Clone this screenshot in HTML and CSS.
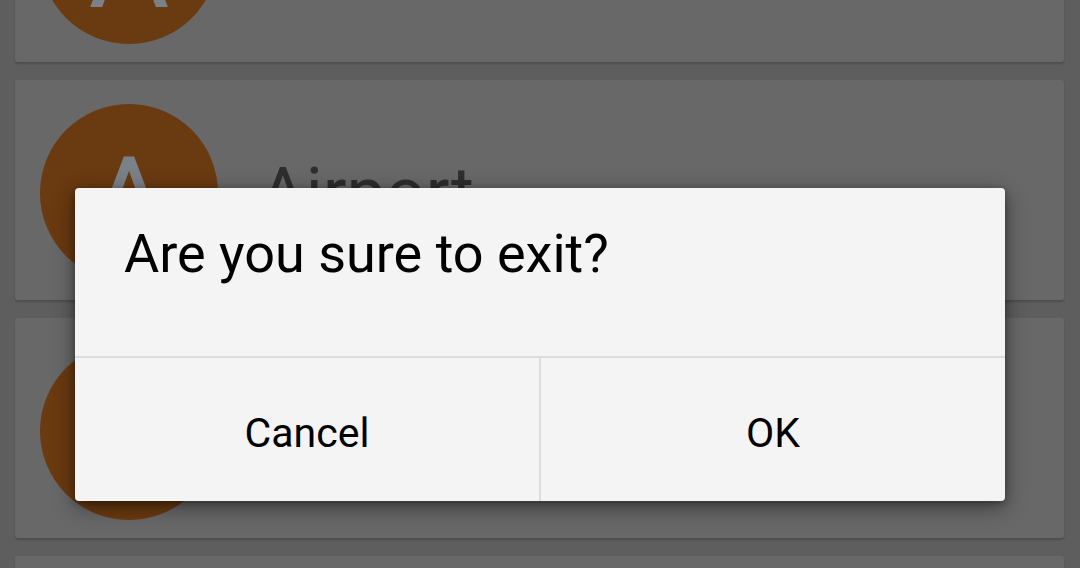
FILE: index.html
```html
<!DOCTYPE html>
<html lang="en">
<head>
<meta charset="utf-8">
<title>Places</title>
<link rel="stylesheet" href="styles.css">
</head>
<body>
<div class="list">
  <div class="card"><div class="avatar">A</div><div class="name">Accounting</div></div>
  <div class="card"><div class="avatar">A</div><div class="name">Airport</div></div>
  <div class="card"><div class="avatar">A</div><div class="name">Amusement Park</div></div>
  <div class="card"><div class="avatar">A</div><div class="name">Aquarium</div></div>
</div>
<div class="dialog">
  <div class="dialog-title">Are you sure to exit?</div>
  <div class="dialog-actions">
    <div class="dialog-btn">Cancel</div>
    <div class="dialog-btn">OK</div>
  </div>
</div>
</body>
</html>
```

FILE: styles.css
```css
html, body {
  margin: 0;
  padding: 0;
  width: 1080px;
  height: 568px;
  overflow: hidden;
  background: #5e5e5e;
  font-family: Roboto, "Noto Sans", sans-serif;
}
.list {
  display: flex;
  flex-direction: column;
  gap: 18px;
  margin-top: -158px;
  padding: 0 16px 0 15px;
}
.card {
  height: 220px;
  background: #686868;
  border-radius: 3px;
  box-shadow: 0 2px 2px rgba(0, 0, 0, 0.18);
  display: flex;
  align-items: center;
  padding-left: 25px;
  flex-shrink: 0;
}
.avatar {
  width: 178px;
  height: 178px;
  box-sizing: border-box;
  margin-top: 6px;
  padding-top: 10px;
  border-radius: 50%;
  background: #6a3a10;
  color: #7b8189;
  font-size: 124px;
  line-height: 178px;
  text-align: center;
  flex-shrink: 0;
}
.name {
  margin-left: 42px;
  margin-top: 6px;
  font-size: 70px;
  color: #2e2e2e;
  white-space: nowrap;
}
.dialog {
  position: absolute;
  left: 75px;
  top: 188px;
  width: 930px;
  height: 313px;
  background: #f4f4f4;
  border-radius: 4px;
  box-shadow: 0 6px 22px rgba(0, 0, 0, 0.45), 0 2px 6px rgba(0, 0, 0, 0.3);
  display: flex;
  flex-direction: column;
  overflow: hidden;
}
.dialog-title {
  height: 170px;
  box-sizing: border-box;
  padding: 34px 0 0 49px;
  font-size: 54px;
  line-height: 64px;
  color: #000;
  border-bottom: 2px solid #dcdcdc;
}
.dialog-actions {
  flex: 1;
  display: flex;
}
.dialog-btn {
  flex: 1;
  display: flex;
  align-items: center;
  justify-content: center;
  font-size: 41px;
  color: #000;
  padding-top: 6px;
}
.dialog-btn + .dialog-btn {
  border-left: 2px solid #dcdcdc;
}
```
